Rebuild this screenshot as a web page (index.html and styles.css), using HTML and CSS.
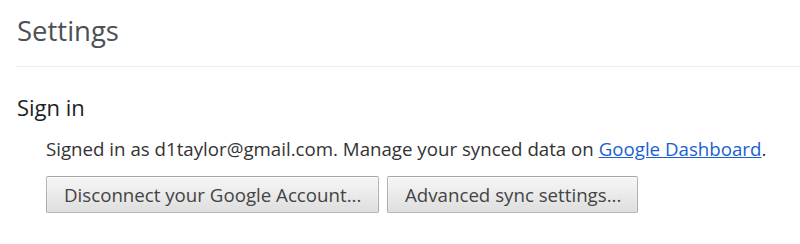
FILE: index.html
```html
<!DOCTYPE html>
<html>
<head>
<meta charset="utf-8">
<link rel="stylesheet" href="styles.css">
</head>
<body>
<div class="page">
  <header class="page-header">
    <h1 class="page-title">Settings</h1>
  </header>
  <section class="section">
    <h3 class="section-title">Sign in</h3>
    <div class="section-body">
      <p class="sync-status">Signed in as d1taylor@gmail.com. Manage your synced data on <a class="link" href="#">Google Dashboard</a>.</p>
      <div class="button-row">
        <button class="btn btn-disconnect">Disconnect your Google Account...</button>
        <button class="btn btn-advanced">Advanced sync settings...</button>
      </div>
    </div>
  </section>
</div>
</body>
</html>
```
FILE: styles.css
```css
html, body {
  margin: 0;
  padding: 0;
  background: #ffffff;
}
body {
  font-family: "Open Sans", "Noto Sans", sans-serif;
  color: #303942;
}
.page {
  padding-left: 16px;
}
.page-header {
  height: 67px;
  border-bottom: 1px solid #eeeeee;
  box-sizing: border-box;
}
.page-title {
  margin: 0;
  padding: 13px 0 0 1px;
  font-size: 27.5px;
  font-weight: 400;
  line-height: 36px;
  color: #4b5157;
}
.section {
  padding-top: 25px;
}
.section-title {
  margin: 0;
  padding-left: 1px;
  font-size: 22px;
  font-weight: 400;
  line-height: 30px;
  color: #222;
}
.section-body {
  padding-left: 30px;
}
.sync-status {
  margin: 14px 0 0 0;
  font-size: 18.7px;
  line-height: 26px;
  color: #333;
  white-space: nowrap;
}
.link {
  color: #1a5fd0;
  text-decoration: underline;
}
.button-row {
  display: flex;
  gap: 8px;
  margin-top: 14px;
}
.btn {
  height: 37px;
  box-sizing: border-box;
  padding: 0 17px;
  font-family: inherit;
  font-size: 18.7px;
  color: #444;
  background: linear-gradient(#f5f5f5, #ededed 40%, #dedede);
  border: 1px solid rgba(0, 0, 0, 0.25);
  border-radius: 2px;
  box-shadow: 0 1px 0 rgba(0, 0, 0, 0.08), inset 0 1px 2px rgba(255, 255, 255, 0.75);
  white-space: nowrap;
}
.btn-disconnect {
  width: 333px;
  text-align: left;
}
.btn-advanced {
  width: 251px;
  text-align: left;
}
```
